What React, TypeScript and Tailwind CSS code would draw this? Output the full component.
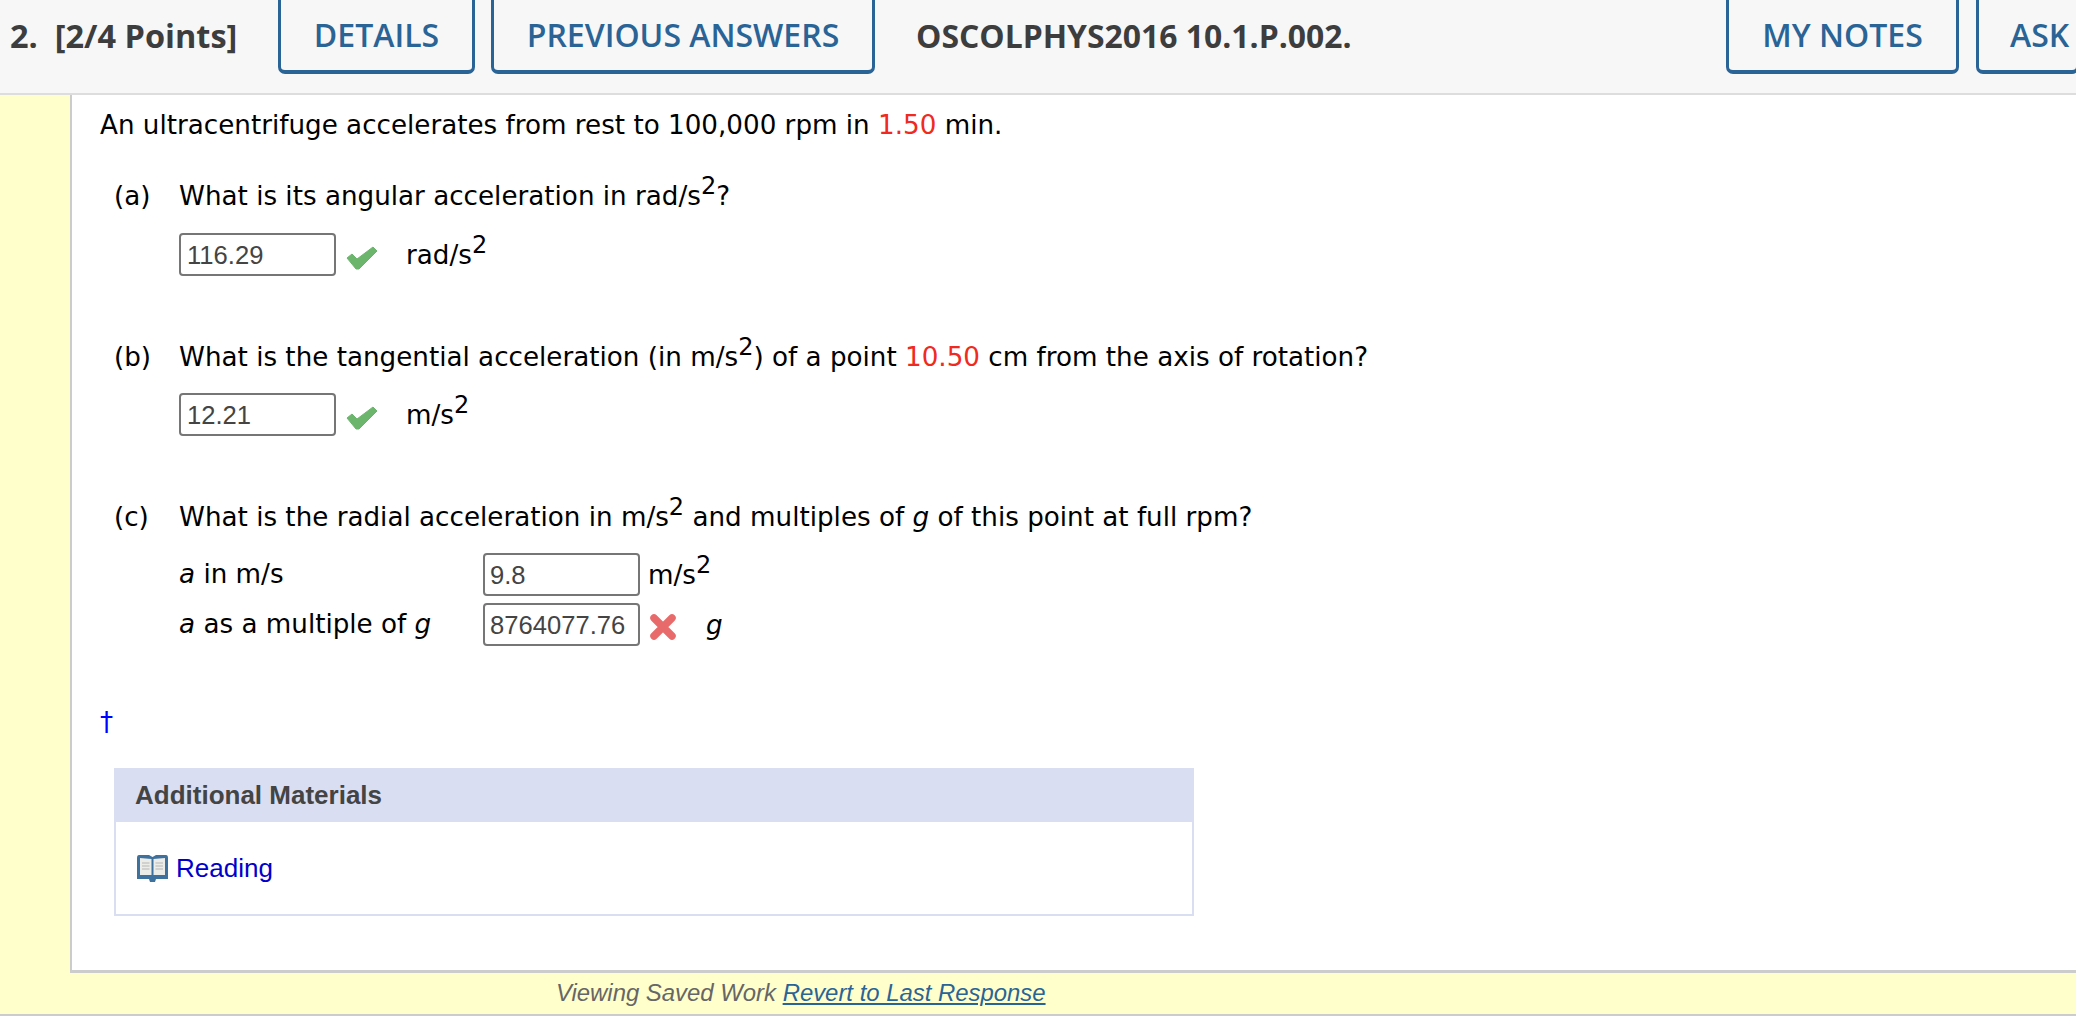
import React from 'react';

const sans = 'font-["DejaVu_Sans",sans-serif]';

function Sup() {
  return <sup className="text-[24px] leading-none align-baseline relative -top-[11px]">2</sup>;
}

function HeaderButton({ label, className }: { label: string; className: string }) {
  return (
    <div className={`h-[93px] -mt-[19px] border-[3px] border-b-[4px] border-[#2a6496] rounded-[7px] flex items-center justify-center pt-[15px] text-[#2a6496] text-[32px] font-semibold ${className}`}>
      {label}
    </div>
  );
}

function CheckIcon() {
  return (
    <svg width="34" height="26" viewBox="0 0 34 26" className="shrink-0 blur-[0.6px]">
      <path d="M2 13 L7 9 L12 14 L28 2 L32 6 L14 24 L11 24 Z" fill="#6cb56c" stroke="#6cb56c" strokeWidth="1" strokeLinejoin="round" />
    </svg>
  );
}

function CrossIcon() {
  return (
    <svg width="30" height="30" viewBox="0 0 30 30" className="shrink-0 blur-[0.6px]">
      <path d="M6 6 L24 24 M24 6 L6 24" fill="none" stroke="#e96a6a" strokeWidth="7.500" strokeLinecap="round" />
    </svg>
  );
}

function BookIcon() {
  return (
    <svg width="33" height="29" viewBox="0 0 33 29" className="shrink-0 blur-[0.4px]">
      <path d="M1 4 Q1 1 3 1 L13 1 L16.500 3 L20 1 L30 1 Q32 1 32 4 L32 25 L20 25 L19 28 L14 28 L13 25 L1 25 Z" fill="#3f719f" />
      <path d="M4 4 L15.500 5 L15.500 21 L4 21 Z M17.500 5 L29 4 L29 21 L17.500 21 Z" fill="#ecece9" />
      <path d="M6 9 H13.500 M6 12 H13.500 M6 15 H13.500 M19.500 9 H27 M19.500 12 H27 M19.500 15 H27" stroke="#c8c8c8" strokeWidth="1.500" />
    </svg>
  );
}

function AnswerBox({ value, className }: { value: string; className: string }) {
  return (
    <div className={`h-[43px] border-2 border-[#767676] rounded-[4px] flex items-center font-["Liberation_Sans",sans-serif] text-[25.6px] text-[#444] shrink-0 ${className}`}>
      {value}
    </div>
  );
}

function Part({ tag, children }: { tag: string; children: React.ReactNode }) {
  return (
    <div className="flex text-[26.2px] leading-[36px] text-black">
      <div className="w-[79px] pl-[14px] shrink-0">{tag}</div>
      <div>{children}</div>
    </div>
  );
}

export default function App() {
  return (
    <div className={`h-screen w-full overflow-hidden bg-[#ffffcc] flex flex-col ${sans}`}>
      <header className="h-[95px] shrink-0 bg-[#f7f7f7] border-b-2 border-[#dddddd] flex font-['Open_Sans',sans-serif] overflow-hidden">
        <div className="w-[278px] shrink-0 pl-[10px] pt-[14px] text-[32.5px] font-bold text-[#3d3d3d] leading-[43px] whitespace-pre">2.  [2/4 Points]</div>
        <HeaderButton label="DETAILS" className="w-[197px]" />
        <HeaderButton label="PREVIOUS ANSWERS" className="w-[384px] ml-[16px]" />
        <div className="ml-[41px] pt-[14px] text-[31.9px] font-bold text-[#3d3d3d] leading-[43px] whitespace-nowrap flex-1">OSCOLPHYS2016 10.1.P.002.</div>
        <HeaderButton label="MY NOTES" className="w-[233px] shrink-0" />
        <HeaderButton label="ASK" className="w-[103px] shrink-0 ml-[17px] -mr-[3px] justify-start pl-[31px]" />
      </header>

      <main className="h-[878px] shrink-0 ml-[70px] bg-white border-l-2 border-b-[3px] border-[#cccccc] pl-[28px] pt-[12px]">
        <p className="text-[26.2px] leading-[36px] text-black">
          An ultracentrifuge accelerates from rest to 100,000 rpm in <span className="text-[#f02a20]">1.50</span> min.
        </p>

        <div className="mt-[35px]">
          <Part tag="(a)">
            What is its angular acceleration in rad/s<Sup />?
            <div className="flex items-center mt-[19px] h-[43px]">
              <AnswerBox value="116.29" className="w-[157px] pl-[6px]" />
              <div className="ml-[9px] mt-[6px]"><CheckIcon /></div>
              <div className="ml-[27px]">rad/s<Sup /></div>
            </div>
          </Part>
        </div>

        <div className="mt-[63px]">
          <Part tag="(b)">
            What is the tangential acceleration (in m/s<Sup />) of a point <span className="text-[#f02a20]">10.50</span> cm from the axis of rotation?
            <div className="flex items-center mt-[18px] h-[43px]">
              <AnswerBox value="12.21" className="w-[157px] pl-[6px]" />
              <div className="ml-[9px] mt-[6px]"><CheckIcon /></div>
              <div className="ml-[27px]">m/s<Sup /></div>
            </div>
          </Part>
        </div>

        <div className="mt-[63px]">
          <Part tag="(c)">
            What is the radial acceleration in m/s<Sup /> and multiples of <i>g</i> of this point at full rpm?
            <div className="flex items-center mt-[18px] h-[43px]">
              <div className="w-[304px] shrink-0 -mt-[2px]"><i>a</i> in m/s</div>
              <AnswerBox value="9.8" className="w-[157px] pl-[5px]" />
              <div className="ml-[8px]">m/s<Sup /></div>
            </div>
            <div className="flex items-center mt-[7px] h-[43px]">
              <div className="w-[304px] shrink-0 -mt-[1px]"><i>a</i> as a multiple of <i>g</i></div>
              <AnswerBox value="8764077.76" className="w-[157px] pl-[5px]" />
              <div className="ml-[8px] mt-[4px]"><CrossIcon /></div>
              <div className="ml-[28px]"><i>g</i></div>
            </div>
          </Part>
        </div>

        <div className="mt-[58px] text-[26.2px] leading-[36px] text-[#0000ff]">†</div>

        <section className="mt-[28px] ml-[14px] w-[1080px] h-[148px] border-2 border-[#d9def3] font-['Liberation_Sans',sans-serif]">
          <div className="-mx-[2px] -mt-[2px] h-[54px] bg-[#d9def3] pl-[21px] pt-[1px] flex items-center text-[26px] font-bold text-[#444444]">Additional Materials</div>
          <div className="flex items-center pl-[20px] pt-[28px]">
            <BookIcon />
            <a className="ml-[7px] text-[26px] leading-[36px] text-[#0000cc]">Reading</a>
          </div>
        </section>
      </main>

      <footer className="flex-1 border-b-2 border-[#cccccc] pl-[556px] pt-[4px] font-['Liberation_Sans',sans-serif] italic text-[23.9px] leading-[32px] text-[#666666]">
        Viewing Saved Work <a className="text-[#2a6496] underline">Revert to Last Response</a>
      </footer>
    </div>
  );
}
